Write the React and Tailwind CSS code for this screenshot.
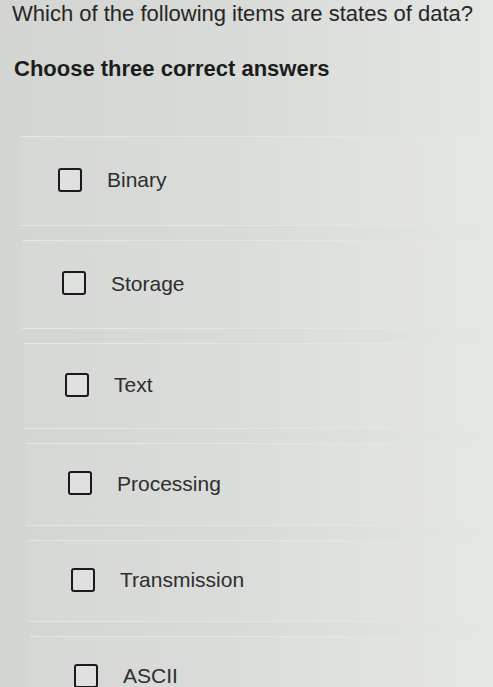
import React from "react";

const OPTIONS = [
  { label: "Binary", row: "h-[90px] ml-[20px] pl-[38px]" },
  { label: "Storage", row: "h-[89px] ml-[22px] pl-[40px]" },
  { label: "Text", row: "h-[86px] ml-[24px] pl-[41px]" },
  { label: "Processing", row: "h-[83px] ml-[26px] pl-[42px]" },
  { label: "Transmission", row: "h-[82px] ml-[28px] pl-[43px]" },
  { label: "ASCII", row: "h-[82px] ml-[30px] pl-[44px]" },
];

function Box() {
  return (
    <span className="block w-[24px] h-[24px] shrink-0 rounded-[3px] border-2 border-[#1a1a1a] bg-[#dfe1de]" />
  );
}

export default function App() {
  return (
    <div
      className="w-[493px] h-[687px] overflow-hidden bg-gradient-to-r from-[#d3d5d2] via-[#d9dbd8] to-[#e3e6e3] text-[#222] flex flex-col"
      style={{ fontFamily: '"Liberation Sans", Arial, sans-serif' }}
    >
      <div className="pl-[12px] pt-[3px] text-[22px] leading-[22px] whitespace-nowrap text-[#262626]">
        Which of the following items are states of data?
      </div>
      <div className="pl-[14px] mt-[33px] text-[22px] leading-[22px] font-bold whitespace-nowrap text-[#1c1c1c]">
        Choose three correct answers
      </div>

      <div className="mt-[56px] flex flex-col gap-[14px]">
        {OPTIONS.map((o) => (
          <div
            key={o.label}
            className={`${o.row} shrink-0 flex items-center pb-[3px] gap-[25px] border-y border-[#e4e6e4] bg-white/5`}
          >
            <Box />
            <span className="text-[21px] leading-none text-[#2e2e2e]">{o.label}</span>
          </div>
        ))}
      </div>
    </div>
  );
}
